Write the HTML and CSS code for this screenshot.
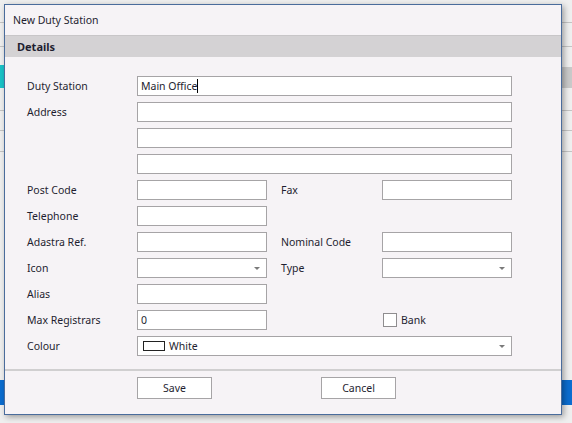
FILE: index.html
```html
<!DOCTYPE html>
<html>
<head>
<meta charset="utf-8">
<link rel="stylesheet" href="styles.css">
</head>
<body>
<div class="backdrop">
  <div class="bg-line l22"></div>
  <div class="bg-line r46"></div>
  <div class="bg-teal"></div>
  <div class="bg-gray"></div>
  <div class="bg-line l110"></div>
  <div class="bg-line l130"></div>
  <div class="bg-line l151"></div>
  <div class="bg-blue"></div>
</div>
<div class="dialog">
  <div class="titlebar">New Duty Station</div>
  <div class="section">Details</div>
  <div class="body">
    <div class="form">
      <div class="lbl">Duty Station</div>
      <div class="field span3"><span class="val">Main Office</span><span class="caret"></span></div>

      <div class="lbl">Address</div>
      <div class="field span3"></div>

      <div class="lbl"></div>
      <div class="field span3"></div>

      <div class="lbl"></div>
      <div class="field span3"></div>

      <div class="lbl">Post Code</div>
      <div class="field"></div>
      <div class="lbl2">Fax</div>
      <div class="field"></div>

      <div class="lbl">Telephone</div>
      <div class="field"></div>
      <div class="lbl2"></div>
      <div></div>

      <div class="lbl">Adastra Ref.</div>
      <div class="field"></div>
      <div class="lbl2">Nominal Code</div>
      <div class="field"></div>

      <div class="lbl">Icon</div>
      <div class="field combo"><span class="arrow"></span></div>
      <div class="lbl2">Type</div>
      <div class="field combo"><span class="arrow"></span></div>

      <div class="lbl">Alias</div>
      <div class="field"></div>
      <div class="lbl2"></div>
      <div></div>

      <div class="lbl">Max Registrars</div>
      <div class="field"><span class="val">0</span></div>
      <div class="lbl2"></div>
      <div class="check"><span class="box"></span><span>Bank</span></div>

      <div class="lbl">Colour</div>
      <div class="field span3 combo"><span class="swatch"></span><span class="val colour">White</span><span class="arrow"></span></div>
    </div>
  </div>
  <div class="footer">
    <div class="btn">Save</div>
    <div class="btn">Cancel</div>
  </div>
</div>
</body>
</html>
```
FILE: styles.css
```css
html, body {
  margin: 0;
  padding: 0;
}
body {
  width: 572px;
  height: 423px;
  background: #efefef;
  position: relative;
  overflow: hidden;
  font-family: "Noto Sans", "Open Sans", sans-serif;
  font-size: 10.5px;
  color: #1e1e30;
}
.backdrop {
  position: absolute;
  inset: 0;
}
.bg-line {
  position: absolute;
  left: 0;
  right: 0;
  height: 1px;
  background: #c4c4c4;
}
.l22 { top: 22px; }
.r46 { top: 46px; }
.l110 { top: 110px; }
.l130 { top: 130px; }
.l151 { top: 151px; }
.bg-teal {
  position: absolute;
  left: 0;
  width: 10px;
  top: 65px;
  height: 23px;
  background: #19c3c8;
}
.bg-gray {
  position: absolute;
  right: 0;
  width: 20px;
  top: 67px;
  height: 21px;
  background: #c9c9c9;
}
.bg-blue {
  position: absolute;
  left: 0;
  right: 0;
  top: 380px;
  height: 25px;
  background: #0b6dd0;
}
.dialog {
  position: absolute;
  left: 4px;
  top: 4px;
  width: 558px;
  height: 411px;
  box-sizing: border-box;
  border: 1px solid #4a6c9c;
  background: #f6f3f6;
  box-shadow: 2px 2px 6px rgba(0, 0, 0, 0.35);
  display: flex;
  flex-direction: column;
}
.titlebar {
  height: 30px;
  flex: none;
  padding-left: 8px;
  display: flex;
  align-items: center;
}
.section {
  flex: none;
  background: #d4d2d4;
  border-top: 1px solid #c8c6c8;
  box-sizing: border-box;
  height: 22px;
  padding-left: 12px;
  display: flex;
  align-items: center;
  font-weight: bold;
  font-size: 11px;
}
.body {
  flex: 1;
  padding: 19px 0 0 22px;
  box-sizing: border-box;
}
.form {
  display: grid;
  grid-template-columns: 110px 130px 115px 130px;
  grid-auto-rows: 20px;
  row-gap: 6px;
}
.lbl, .lbl2 {
  display: flex;
  align-items: center;
}
.lbl2 {
  padding-left: 14px;
}
.field {
  background: #ffffff;
  border: 1px solid #a6a4a6;
  box-sizing: border-box;
  display: flex;
  align-items: center;
  padding-left: 3px;
  position: relative;
}
.span3 {
  grid-column: 2 / span 3;
}
.caret {
  width: 1px;
  height: 14px;
  background: #000;
}
.arrow {
  position: absolute;
  right: 6px;
  top: 8px;
  width: 0;
  height: 0;
  border-left: 3px solid transparent;
  border-right: 3px solid transparent;
  border-top: 3px solid #7a7a7a;
}
.swatch {
  width: 20px;
  height: 8px;
  border: 1px solid #222;
  margin-left: 2px;
  margin-right: 4px;
  background: #fff;
}
.check {
  display: flex;
  align-items: center;
  gap: 4px;
}
.box {
  width: 12px;
  height: 12px;
  border: 1px solid #8f8d8f;
  background: #fff;
  margin-left: 1px;
}
.footer {
  flex: none;
  height: 45px;
  box-sizing: border-box;
  border-top: 2px solid #d0cfd0;
  padding: 6px 0 0 132px;
  display: flex;
  align-items: flex-start;
  gap: 109px;
}
.btn {
  width: 75px;
  height: 22px;
  box-sizing: border-box;
  border: 1px solid #a6a4a6;
  background: #ffffff;
  display: flex;
  align-items: center;
  justify-content: center;
}
```
